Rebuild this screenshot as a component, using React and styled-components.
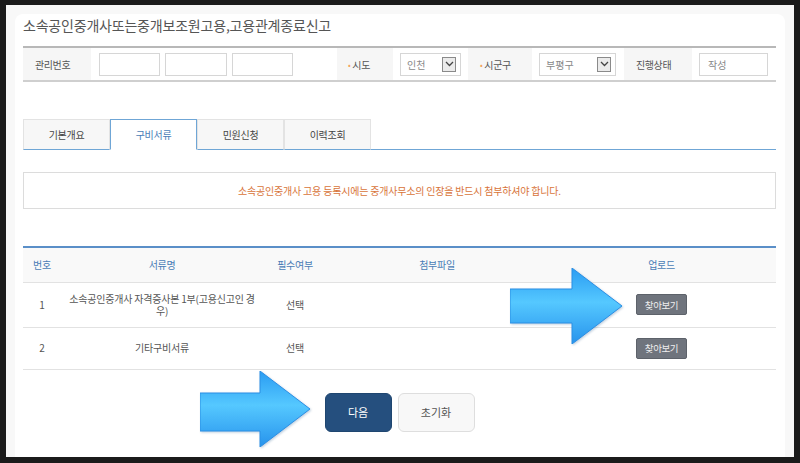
import React from 'react';
import styled, { createGlobalStyle } from 'styled-components';

const GlobalStyle = createGlobalStyle`
  html, body {
    margin: 0;
    padding: 0;
    background: #1b1b1b;
  }
  body {
    font-family: 'Noto Sans CJK KR', 'Noto Sans', sans-serif;
  }
  * { box-sizing: border-box; }
`;

const Frame = styled.div`
  width: 788px;
  height: 452px;
  margin: 5px 0 0 6px;
  background: #f8f8f8;
  padding: 9px 9px 0 9px;
  overflow: hidden;
`;

const Panel = styled.div`
  position: relative;
  height: 100%;
  background: #ffffff;
  border-radius: 8px 8px 0 0;
  padding: 1px 9px 0 8px;
  display: flex;
  flex-direction: column;
`;

const Title = styled.h1`
  margin: 0;
  height: 20px;
  line-height: 20px;
  font-size: 14px;
  font-weight: 400;
  letter-spacing: -0.2px;
  color: #555;
`;

const InfoBar = styled.div`
  margin-top: 11px;
  display: flex;
  align-items: stretch;
  height: 36px;
  border-top: 2px solid #b8b8b8;
  border-bottom: 2px solid #cfcfcf;
`;

const Label = styled.div`
  width: ${p => p.$w}px;
  margin-left: ${p => p.$ml || 0}px;
  background: #f6f6f6;
  display: flex;
  align-items: center;
  padding-left: ${p => p.$pl || 12}px;
  font-size: 10px;
  letter-spacing: -0.4px;
  color: #555;
`;

const Star = styled.span`
  color: #f3a35a;
  font-size: 8px;
  margin-right: 2px;
`;

const Field = styled.div`
  align-self: center;
  width: ${p => p.$w}px;
  margin-left: ${p => p.$ml || 0}px;
  height: 23px;
  border: 1px solid #d6d6d6;
  background: #fff;
  display: flex;
  align-items: center;
  padding-left: ${p => p.$pl || 6}px;
  font-size: 10px;
  color: #888;
`;

const SelectBtn = styled.span`
  margin-left: auto;
  margin-right: 4px;
  width: 14px;
  height: 15px;
  border: 1px solid #8a8a8a;
  background: #ebebeb;
  display: flex;
  align-items: center;
  justify-content: center;
`;

const Tabs = styled.div`
  margin-top: 37px;
  display: flex;
  border-bottom: 1px solid #6fa6d6;
`;

const Tab = styled.div`
  width: 87px;
  height: 31px;
  margin-bottom: -1px;
  display: flex;
  align-items: center;
  justify-content: center;
  font-size: 10px;
  letter-spacing: -0.3px;
  color: ${p => (p.$active ? '#4a7db6' : '#444')};
  background: ${p => (p.$active ? '#fff' : '#f7f7f7')};
  border: 1px solid ${p => (p.$active ? '#6fa6d6' : '#e3e3e3')};
  border-bottom: 1px solid ${p => (p.$active ? '#fff' : '#6fa6d6')};
`;

const Notice = styled.div`
  margin-top: 22px;
  height: 37px;
  border: 1px solid #dcdcdc;
  display: flex;
  align-items: center;
  justify-content: center;
  font-size: 10px;
  letter-spacing: -0.2px;
  color: #d8743a;
`;

const Table = styled.table`
  margin-top: 37px;
  width: 753px;
  border-collapse: collapse;
  table-layout: fixed;
  border-top: 2px solid #5a8fc8;
`;

const Th = styled.th`
  height: 35px;
  background: #f9f9f9;
  font-weight: 400;
  font-size: 10px;
  letter-spacing: -0.3px;
  color: #4a7db6;
  border-bottom: 1px solid #e2e2e2;
  padding: 0;
`;

const Td = styled.td`
  padding: 10px 8px;
  text-align: center;
  font-size: 10px;
  line-height: 12px;
  letter-spacing: -0.2px;
  color: #555;
  border-bottom: 1px solid #e2e2e2;
  height: 41px;
  word-break: break-all;
`;

const FindButton = styled.button`
  width: 51px;
  height: 21px;
  border: 1px solid #5d626a;
  border-radius: 2px;
  background: #6f747d;
  color: #eee;
  font-family: inherit;
  font-size: 9.5px;
  letter-spacing: -0.4px;
  padding: 0;
  vertical-align: middle;
`;

const Actions = styled.div`
  margin-top: 23px;
  display: flex;
  justify-content: center;
  gap: 6px;
`;

const ActionButton = styled.button`
  width: ${p => p.$w}px;
  height: 39px;
  border-radius: 6px;
  font-family: inherit;
  font-size: 11px;
  border: 1px solid ${p => (p.$primary ? '#1f4670' : '#dedede')};
  background: ${p => (p.$primary ? '#254f7e' : '#f8f8f8')};
  color: ${p => (p.$primary ? '#fff' : '#555')};
`;

const ArrowBox = styled.svg`
  position: absolute;
  left: ${p => p.$x}px;
  top: ${p => p.$y}px;
  filter: drop-shadow(1px 1px 1px rgba(0, 60, 120, 0.25));
`;

const Chevron = () => (
  <svg width="9" height="6" viewBox="0 0 9 6">
    <path d="M1 1 L4.5 4.5 L8 1" fill="none" stroke="#444" strokeWidth="1.3" />
  </svg>
);

const Arrow = ({ x, y, w, h, shaftTop, shaftBottom, headX, id }) => (
  <ArrowBox $x={x} $y={y} width={w} height={h} viewBox={`0 0 ${w} ${h}`}>
    <defs>
      <linearGradient id={id} x1="0" y1="0" x2="0" y2="1">
        <stop offset="0" stopColor="#2a9cf2" />
        <stop offset="0.45" stopColor="#55c8ff" />
        <stop offset="1" stopColor="#2793ec" />
      </linearGradient>
    </defs>
    <path
      d={`M0 ${shaftTop} L${headX} ${shaftTop} L${headX} 0 L${w} ${h / 2} L${headX} ${h} L${headX} ${shaftBottom} L0 ${shaftBottom} Z`}
      fill={`url(#${id})`}
      stroke="#2b8fe4"
      strokeWidth="1"
    />
  </ArrowBox>
);

const rows = [
  { no: 1, name: '소속공인중개사 자격증사본 1부(고용신고인 경우)', req: '선택' },
  { no: 2, name: '기타구비서류', req: '선택' },
];

export default function App() {
  return (
    <>
      <GlobalStyle />
      <Frame>
        <Panel>
          <Title>소속공인중개사또는중개보조원고용,고용관계종료신고</Title>

          <InfoBar>
            <Label $w={68}>관리번호</Label>
            <Field $w={61} $ml={8} />
            <Field $w={62} $ml={5} />
            <Field $w={61} $ml={5} />
            <Label $w={56} $ml={44} $pl={11}><Star>•</Star>시도</Label>
            <Field $w={61} $ml={7}>인천<SelectBtn><Chevron /></SelectBtn></Field>
            <Label $w={64} $ml={7}><Star>•</Star>시군구</Label>
            <Field $w={77} $ml={7}>부평구<SelectBtn><Chevron /></SelectBtn></Field>
            <Label $w={68} $ml={8}>진행상태</Label>
            <Field $w={69} $ml={7} $pl={8}>작성</Field>
          </InfoBar>

          <Tabs>
            <Tab>기본개요</Tab>
            <Tab $active>구비서류</Tab>
            <Tab>민원신청</Tab>
            <Tab>이력조회</Tab>
          </Tabs>

          <Notice>소속공인중개사 고용 등록시에는 중개사무소의 인장을 반드시 첨부하셔야 합니다.</Notice>

          <Table>
            <colgroup>
              <col style={{ width: 38 }} />
              <col style={{ width: 202 }} />
              <col style={{ width: 64 }} />
              <col style={{ width: 220 }} />
              <col style={{ width: 229 }} />
            </colgroup>
            <thead>
              <tr>
                <Th>번호</Th>
                <Th>서류명</Th>
                <Th>필수여부</Th>
                <Th>첨부파일</Th>
                <Th>업로드</Th>
              </tr>
            </thead>
            <tbody>
              {rows.map(r => (
                <tr key={r.no}>
                  <Td>{r.no}</Td>
                  <Td>{r.name}</Td>
                  <Td>{r.req}</Td>
                  <Td />
                  <Td><FindButton>찾아보기</FindButton></Td>
                </tr>
              ))}
            </tbody>
          </Table>

          <Actions>
            <ActionButton $primary $w={67}>다음</ActionButton>
            <ActionButton $w={77}>초기화</ActionButton>
          </Actions>

          <Arrow id="ga" x={495} y={254} w={112} h={76} shaftTop={21} shaftBottom={55} headX={62} />
          <Arrow id="gb" x={185} y={357} w={110} h={76} shaftTop={22} shaftBottom={60} headX={60} />
        </Panel>
      </Frame>
    </>
  );
}
